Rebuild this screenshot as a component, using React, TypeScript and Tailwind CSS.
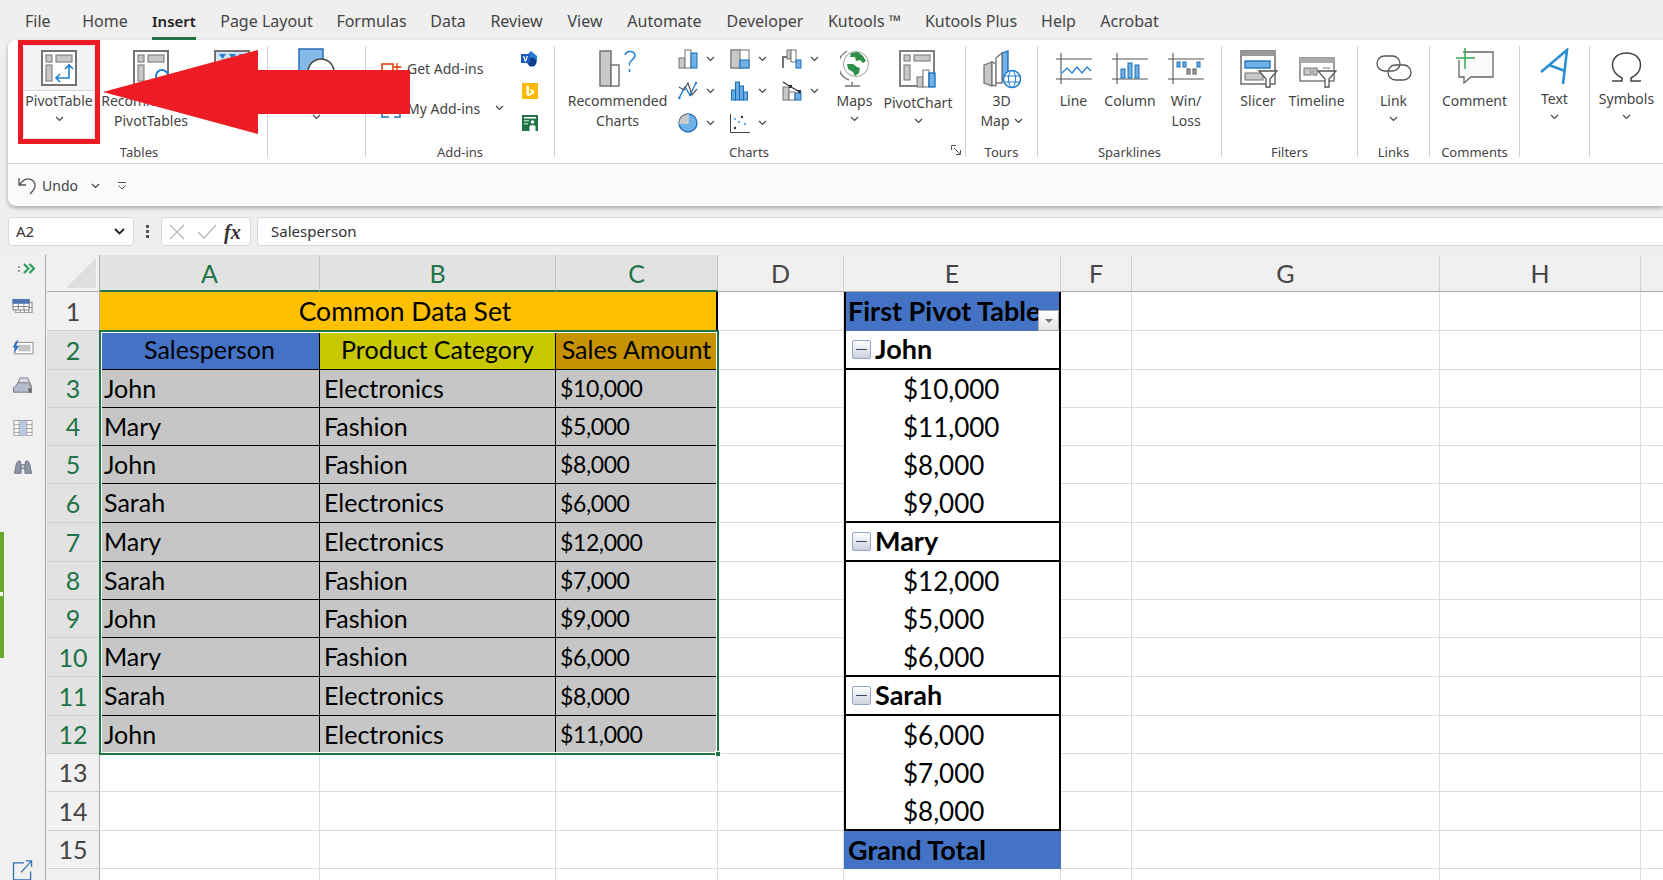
import React from 'react';

const G = '#737373';
const L = '#c8c8c8';
const B = '#1f7fd0';
const LB = '#6fb1e8';

const Chevron = ({ className = '' }: { className?: string }) => (
  <svg width="9" height="6" viewBox="0 0 9 6" className={className} fill="none" stroke="#444" strokeWidth="1.2">
    <path d="M1 1l3.5 3.5L8 1" />
  </svg>
);

const PivotFrame = () => (
  <>
    <rect x="1" y="1" width="34" height="34" fill="#fff" stroke={G} strokeWidth="2" />
    <rect x="5" y="5" width="6" height="7" fill={L} stroke={G} />
    <rect x="15" y="5" width="16" height="7" fill={L} stroke={G} />
    <rect x="5" y="15" width="6" height="16" fill={L} stroke={G} />
  </>
);

const PivotTableIcon = () => (
  <svg width="36" height="36" viewBox="0 0 36 36" fill="none">
    <PivotFrame />
    <path d="M29 17v12H17M25 20l4-4 4 4M20 25l-4 4 4 4" stroke={B} strokeWidth="1.6" transform="translate(-1 -1)" />
  </svg>
);

const RecPivotIcon = () => (
  <svg width="36" height="36" viewBox="0 0 36 36" fill="none">
    <PivotFrame />
    <circle cx="29" cy="26" r="6" fill="#fff" stroke={B} strokeWidth="2" />
  </svg>
);

const TableIcon = () => (
  <svg width="36" height="36" viewBox="0 0 36 36" fill="none">
    <rect x="1" y="1" width="34" height="34" fill="#fff" stroke={G} strokeWidth="2" />
    <rect x="2" y="2" width="32" height="8" fill="#cfe3f5" />
    <path d="M5 4h7l-3.5 5zM15 4h7l-3.5 5zM25 4h7l-3.5 5z" fill={B} />
  </svg>
);

const ShapesIcon = () => (
  <svg width="37" height="40" viewBox="0 0 37 40" fill="none">
    <rect x="1" y="1" width="24" height="28" fill="#85bbea" stroke="#2a6fb5" strokeWidth="1.5" />
    <circle cx="23" cy="24" r="13" fill="#fff" stroke="#444" strokeWidth="1.5" />
  </svg>
);

const GetAddInIcon = () => (
  <svg width="21" height="13" viewBox="0 0 21 13" fill="none" className="mt-[3px]">
    <rect x="1" y="1" width="11" height="11" stroke="#d83b01" strokeWidth="1.5" />
    <path d="M16 0v8M12.500 4h8" stroke="#d83b01" strokeWidth="1.3" />
  </svg>
);

const MyAddInIcon = () => (
  <svg width="20" height="18" viewBox="0 0 20 18" fill="none" className="mt-[3px]">
    <path d="M1 9v7h7M13 16h6V9" stroke="#2b6fc4" strokeWidth="1.6" />
    <rect x="5" y="2" width="9" height="9" fill="#fff" stroke="#2b6fc4" strokeWidth="1.4" />
  </svg>
);

const VisioIcon = () => (
  <svg width="18" height="16" viewBox="0 0 18 16">
    <path d="M10 0l6 5v5l-6 6-4-4V4z" fill="#2b7cd3" />
    <circle cx="11" cy="11" r="4.500" fill="#103f91" />
    <rect x="0" y="3" width="9" height="9" fill="#185abd" />
    <path d="M2 5h1.300l1.200 4 1.200-4H7L5.200 10.500H3.800z" fill="#fff" />
  </svg>
);

const BingIcon = () => (
  <svg width="16" height="16" viewBox="0 0 16 16">
    <rect width="16" height="16" fill="#ffb900" />
    <path d="M4.500 2.500l2.500.8v7.500l3.200-1.700-1.500-.8-.9-2.300 4.200 1.500v2.400L7 13.200l-2.500-1.400z" fill="#fff" />
  </svg>
);

const PeopleIcon = () => (
  <svg width="16" height="16" viewBox="0 0 16 16">
    <rect width="16" height="16" fill="#217346" />
    <rect x="2" y="2" width="12" height="1.500" fill="#fff" />
    <rect x="2" y="5" width="5" height="1.500" fill="#9fd5b7" />
    <rect x="2" y="8" width="4" height="1.500" fill="#9fd5b7" />
    <circle cx="10.500" cy="7" r="1.800" fill="#fff" />
    <path d="M7.500 16v-4q0-2 3-2t3 2v4z" fill="#fff" />
  </svg>
);

const RecChartsIcon = () => (
  <svg width="38" height="37" viewBox="0 0 38 37" fill="none">
    <rect x="1" y="1" width="11" height="35" fill={L} stroke={G} strokeWidth="1.5" />
    <rect x="12" y="15" width="8" height="21" fill="#fff" stroke={G} strokeWidth="1.5" />
    <path d="M26 5q1-3.500 5-3.500t5 3.500q0 3-3 5t-2.500 5.500M30.500 19v3" stroke={B} strokeWidth="1.500" />
  </svg>
);

const ColumnChartIcon = () => (
  <svg width="20" height="20" viewBox="0 0 20 20" fill="none">
    <rect x="1" y="9" width="6" height="10" fill={L} stroke={G} />
    <rect x="7" y="1" width="6" height="18" fill="#fff" stroke={G} />
    <rect x="13" y="4" width="6" height="15" fill={LB} stroke="#1a6cb5" />
  </svg>
);

const TreeIcon = () => (
  <svg width="20" height="20" viewBox="0 0 20 20" fill="none">
    <rect x="1" y="1" width="18" height="18" fill="#fff" stroke={G} />
    <rect x="1" y="1" width="9" height="18" fill={L} stroke={G} />
    <rect x="10" y="11" width="9" height="8" fill={LB} stroke="#1a6cb5" />
  </svg>
);

const WaterfallIcon = () => (
  <svg width="20" height="20" viewBox="0 0 20 20" fill="none">
    <path d="M1 19V8h4" stroke={G} strokeWidth="2" />
    <rect x="5" y="1" width="4" height="9" fill={L} stroke={G} />
    <rect x="9" y="1" width="5" height="12" fill="#fff" stroke={G} />
    <rect x="14" y="11" width="5" height="8" fill={LB} stroke="#1a6cb5" />
  </svg>
);

const LineChartIcon = () => (
  <svg width="20" height="20" viewBox="0 0 20 20" fill="none">
    <path d="M1 17L7 6l5 8 6-12" stroke={B} strokeWidth="1.400" />
    <path d="M1 6l5 3 4-7 4 12 5-6" stroke="#555" strokeWidth="1.200" />
    <circle cx="1.500" cy="17" r="1.200" fill={B} />
    <circle cx="12" cy="14" r="1.200" fill={B} />
    <circle cx="18" cy="2" r="1.200" fill={B} />
  </svg>
);

const HistogramIcon = () => (
  <svg width="20" height="20" viewBox="0 0 20 20" fill="#69ace3" stroke="#1a6cb5">
    <rect x="1.500" y="9" width="4" height="10" />
    <rect x="5.500" y="1" width="4" height="18" />
    <rect x="9.500" y="5" width="4" height="14" />
    <rect x="13.500" y="11" width="4" height="8" />
  </svg>
);

const ComboIcon = () => (
  <svg width="20" height="20" viewBox="0 0 20 20" fill="none">
    <rect x="1" y="6" width="6" height="13" fill={L} stroke={G} />
    <rect x="7" y="11" width="6" height="8" fill="#fff" stroke={G} />
    <rect x="13" y="12" width="6" height="7" fill={LB} stroke="#1a6cb5" />
    <path d="M1 1l8 5 9 5" stroke="#333" strokeWidth="1.300" />
    <rect x="7" y="4" width="3" height="3" fill="#333" />
    <rect x="16" y="9" width="3" height="3" fill="#333" />
  </svg>
);

const PieIcon = () => (
  <svg width="20" height="20" viewBox="0 0 20 20" fill="none">
    <circle cx="10" cy="10" r="9" fill={LB} stroke="#1a6cb5" strokeWidth="1.300" />
    <path d="M10 10V1a9 9 0 0 0-9 9z" fill={L} stroke={G} />
    <path d="M10 1v9H1" stroke="#fff" />
  </svg>
);

const ScatterIcon = () => (
  <svg width="20" height="20" viewBox="0 0 20 20" fill="none">
    <path d="M.500 1v18.500H20" stroke="#444" />
    <circle cx="5" cy="15" r="1.200" fill="#333" />
    <circle cx="12" cy="4" r="1.200" fill="#333" />
    <circle cx="9" cy="9" r="1.200" fill={LB} />
    <circle cx="15" cy="11" r="1.200" fill={LB} />
    <circle cx="5" cy="6" r="1.200" fill={LB} />
  </svg>
);

const GlobeIcon = () => (
  <svg width="30" height="38" viewBox="0 0 30 38" fill="none">
    <path d="M7 2a16 16 0 0 0 2 29" stroke={G} strokeWidth="1.400" />
    <circle cx="16" cy="15" r="12.500" fill="#fff" stroke="#9a9a9a" />
    <path d="M11 4l7-1 5 4 3 5-3 2-3-3-4 1-1-4-5 0zM7 15l6 0 4 3 3 1-1 5-4 3-2-4-5-3z" fill="#2d8f47" />
    <path d="M12 33v3M5 37h15" stroke={G} strokeWidth="1.400" />
  </svg>
);

const PivotChartIcon = () => (
  <svg width="38" height="39" viewBox="0 0 38 39" fill="none">
    <rect x="1" y="1" width="34" height="35" fill="#fff" stroke={G} strokeWidth="1.800" />
    <rect x="5" y="5" width="6" height="6" fill={L} stroke={G} />
    <rect x="15" y="5" width="16" height="6" fill={L} stroke={G} />
    <rect x="5" y="15" width="6" height="15" fill={L} stroke={G} />
    <rect x="18" y="27" width="6" height="10" fill={L} stroke={G} />
    <rect x="24" y="20" width="6" height="17" fill="#fff" stroke={G} />
    <rect x="30" y="23" width="6" height="14" fill={LB} stroke="#1a6cb5" strokeWidth="1.300" />
  </svg>
);

const Map3dIcon = () => (
  <svg width="38" height="39" viewBox="0 0 38 39" fill="none">
    <path d="M1 15l8-3v24l-8-3z" fill={L} stroke={G} strokeWidth="1.300" />
    <path d="M9 12l4 2v22l-4-1z" fill="#fff" stroke={G} strokeWidth="1.300" />
    <path d="M19 3l6-2 v20l-6 10z" fill={LB} stroke="#1a6cb5" strokeWidth="1.300" />
    <path d="M13 8l6-5v30h-6z" fill="#fff" stroke={G} strokeWidth="1.300" />
    <circle cx="29" cy="29" r="8.500" fill="#fff" stroke={B} strokeWidth="1.500" />
    <ellipse cx="29" cy="29" rx="3.500" ry="8.500" stroke={B} />
    <path d="M21 26h16M21 32h16" stroke={B} />
  </svg>
);

const SparkFrame = ({ children }: { children?: React.ReactNode }) => (
  <svg width="36" height="31" viewBox="0 0 36 31" fill="none">
    <path d="M0 6h36M0 26h36M5 0v31" stroke="#555" strokeWidth="1.100" />
    {children}
  </svg>
);

const SlicerIcon = () => (
  <svg width="38" height="38" viewBox="0 0 38 38" fill="none">
    <rect x="1" y="1" width="34" height="33" fill="#fff" stroke={G} strokeWidth="1.600" />
    <rect x="1" y="1" width="34" height="5" fill="#999" />
    <rect x="5" y="11" width="25" height="7" fill={LB} stroke="#1a6cb5" strokeWidth="1.300" />
    <rect x="5" y="23" width="18" height="7" fill={L} stroke={G} />
    <path d="M19 21h18l-7 8v8h-4v-8z" fill="#fff" stroke="#555" strokeWidth="1.300" />
  </svg>
);

const TimelineIcon = () => (
  <svg width="38" height="31" viewBox="0 0 38 31" fill="none">
    <rect x="1" y="1" width="34" height="23" fill="#fff" stroke={G} strokeWidth="1.400" />
    <rect x="1" y="1" width="34" height="5" fill="#aaa" />
    <rect x="5" y="11" width="7" height="7" fill={L} stroke={G} />
    <rect x="14" y="11" width="4" height="7" fill={L} stroke={G} />
    <path d="M24 11h7" stroke={G} />
    <path d="M19 14h18l-7 8v8h-4v-8z" fill="#fff" stroke="#555" strokeWidth="1.300" />
  </svg>
);

const LinkIcon = () => (
  <svg width="36" height="26" viewBox="0 0 36 26" fill="none" stroke="#555" strokeWidth="1.300">
    <rect x="1" y="1" width="23" height="15" rx="7.500" />
    <rect x="12" y="10" width="23" height="15" rx="7.500" />
  </svg>
);

const CommentIcon = () => (
  <svg width="38" height="36" viewBox="0 0 38 36" fill="none">
    <path d="M7 4h30v25H15l-7 6v-6H3V12" fill="#fafafa" stroke="#666" strokeWidth="1.300" />
    <path d="M9 0v21M0 10h19" stroke="#34a853" strokeWidth="1.500" />
  </svg>
);

const TextAIcon = () => (
  <svg width="30" height="36" viewBox="0 0 30 36" fill="none" stroke="#2b8fd6" strokeWidth="2.600">
    <path d="M1 24L27 2 23 36M9 17l16 6" />
  </svg>
);

const OmegaIcon = () => (
  <svg width="31" height="30" viewBox="0 0 31 30" fill="none" stroke="#444" strokeWidth="1.500">
    <path d="M1 29h10v-3C5 23 1.500 18 1.500 13 1.500 6 7 1 15.500 1S29.500 6 29.500 13c0 5-3.500 10-9.500 13v3h10" />
  </svg>
);

const LauncherIcon = () => (
  <svg width="10" height="10" viewBox="0 0 10 10" fill="none" stroke="#555">
    <path d="M.500 5V.500H5M3 3l6 6M9.500 5v4.500H5" />
  </svg>
);

interface BtnProps {
  className: string;
  icon: React.ReactNode;
  lines?: string[];
  chevron?: boolean;
  iconClass?: string;
}

// one big ribbon button: icon, one or two lines of label, optional chevron
const RibbonBtn = ({ className, icon, lines = [], chevron, iconClass = 'h-[46px] pt-[5px]' }: BtnProps) => (
  <div className={`flex flex-col items-center shrink-0 ${className}`}>
    <div className={`flex justify-center ${iconClass}`}>{icon}</div>
    {lines.map(l => (
      <div key={l} className="h-[20px] leading-[20px] whitespace-nowrap">{l}</div>
    ))}
    {chevron && <div className="h-[15px] flex items-center"><Chevron /></div>}
  </div>
);

const Sep = () => <div className="w-px h-[111px] mt-px bg-[#d2d2d2] shrink-0" />;

const Group = ({ className, label, labelClass = '', children }: { className: string; label?: string; labelClass?: string; children: React.ReactNode }) => (
  <div className={`flex flex-col shrink-0 h-[118px] ${className}`}>
    <div className="flex flex-1">{children}</div>
    {label && <div className={`h-[20px] text-center text-[13px] leading-[20px] text-[#444] mb-px ${labelClass}`}>{label}</div>}
  </div>
);

const SmallChart = ({ icon }: { icon: React.ReactNode }) => (
  <div className="flex items-center h-[20px] w-[52px]">
    {icon}
    <Chevron className="ml-[8px]" />
  </div>
);

const tabs = [
  { t: 'Home', c: 'w-[46px]' },
  { t: 'Insert', c: 'w-[44px] font-semibold text-[15px] text-[#222]' },
  { t: 'Page Layout', c: 'w-[93px]' },
  { t: 'Formulas', c: 'w-[69px]' },
  { t: 'Data', c: 'w-[36px]' },
  { t: 'Review', c: 'w-[53px]' },
  { t: 'View', c: 'w-[36px]' },
  { t: 'Automate', c: 'w-[75px]' },
  { t: 'Developer', c: 'w-[78px]' },
  { t: 'Kutools ™', c: 'w-[73px]' },
  { t: 'Kutools Plus', c: 'w-[92px]' },
  { t: 'Help', c: 'w-[35px]' },
  { t: 'Acrobat', c: 'w-[59px]' },
];

const Ribbon = () => (
  <div className="ml-[8px] h-[166px] rounded-l-[8px] bg-[#fafafa] shadow-[0_2px_4px_rgba(0,0,0,0.3)] overflow-hidden">
    <div className="h-[124px] bg-white border-b border-[#d4d4d4] pt-[5px] flex text-[14px] text-[#444]">
      <Group className="w-[259px]" label="Tables" labelClass="pl-[3px]">
        <RibbonBtn
          className="w-[72px] ml-[15px] h-[94px] rounded-[3px] border border-[#e2e2e2]"
          iconClass="h-[45px] pt-[4px] w-full bg-[#f4f4f4] border-b border-[#d6d6d6]"
          icon={<PivotTableIcon />}
          lines={['PivotTable']}
          chevron
        />
        <RibbonBtn className="w-[100px] ml-[6px]" icon={<RecPivotIcon />} lines={['Recommended', 'PivotTables']} />
        <RibbonBtn className="w-[61px]" icon={<TableIcon />} />
      </Group>
      <Sep />
      <Group className="w-[97px]">
        <div className="flex flex-col items-center w-full pt-[3px]">
          <div className="h-[65px]"><ShapesIcon /></div>
          <Chevron className="mt-[1px]" />
        </div>
      </Group>
      <Sep />
      <Group className="w-[188px]" label="Add-ins">
        <div className="w-[156px] pl-[15px] pt-[13px]">
          <div className="flex items-center h-[20px]">
            <GetAddInIcon />
            <span className="ml-[5px]">Get Add-ins</span>
          </div>
          <div className="flex items-center h-[20px] mt-[20px]">
            <MyAddInIcon />
            <span className="ml-[6px]">My Add-ins</span>
            <Chevron className="ml-[15px]" />
          </div>
        </div>
        <div className="flex flex-col items-center gap-[16px] pt-[6px] w-[16px]">
          <VisioIcon />
          <BingIcon />
          <PeopleIcon />
        </div>
      </Group>
      <Sep />
      <div className="w-[410px] shrink-0 flex flex-col h-[118px]">
        <div className="flex flex-1">
          <RibbonBtn className="w-[101px] ml-[12px]" icon={<RecChartsIcon />} lines={['Recommended', 'Charts']} />
          <div className="grid grid-cols-[52px_52px_52px] auto-rows-[20px] gap-y-[12px] ml-[10px] pt-[4px] h-[90px]">
            <SmallChart icon={<ColumnChartIcon />} />
            <SmallChart icon={<TreeIcon />} />
            <SmallChart icon={<WaterfallIcon />} />
            <SmallChart icon={<LineChartIcon />} />
            <SmallChart icon={<HistogramIcon />} />
            <SmallChart icon={<ComboIcon />} />
            <SmallChart icon={<PieIcon />} />
            <SmallChart icon={<ScatterIcon />} />
          </div>
          <RibbonBtn className="w-[57px] -ml-[8px]" iconClass="h-[46px] pt-[4px]" icon={<GlobeIcon />} lines={['Maps']} chevron />
          <RibbonBtn className="w-[70px]" iconClass="h-[48px] pt-[5px]" icon={<PivotChartIcon />} lines={['PivotChart']} chevron />
        </div>
        <div className="flex h-[20px] mb-px">
          <div className="w-[388px] text-center text-[13px] leading-[20px]">Charts</div>
          <div className="pl-[8px] pt-[3px]"><LauncherIcon /></div>
        </div>
      </div>
      <Sep />
      <Group className="w-[71px]" label="Tours">
        <div className="w-full flex flex-col items-center">
          <div className="h-[46px] pt-[5px]"><Map3dIcon /></div>
          <div className="h-[20px] leading-[20px]">3D</div>
          <div className="h-[20px] leading-[20px] flex items-center">Map<Chevron className="ml-[4px]" /></div>
        </div>
      </Group>
      <Sep />
      <Group className="w-[183px]" label="Sparklines">
        <RibbonBtn
          className="w-[57px] ml-[7px]"
          iconClass="h-[46px] pt-[8px]"
          lines={['Line']}
          icon={<SparkFrame><path d="M6 20l5-5 5 5 5-6 5 6 5-6 4 4" stroke={B} strokeWidth="1.200" /></SparkFrame>}
        />
        <RibbonBtn
          className="w-[56px]"
          iconClass="h-[46px] pt-[8px]"
          lines={['Column']}
          icon={<SparkFrame><g fill={LB} stroke="#1a6cb5"><rect x="9" y="16" width="4" height="9" /><rect x="16" y="10" width="4" height="15" /><rect x="23" y="12" width="4" height="13" /></g></SparkFrame>}
        />
        <RibbonBtn
          className="w-[56px]"
          iconClass="h-[46px] pt-[8px]"
          lines={['Win/', 'Loss']}
          icon={<SparkFrame><g fill={LB} stroke="#1a6cb5"><rect x="9" y="9" width="3" height="5" /><rect x="15" y="9" width="3" height="5" /><rect x="29" y="9" width="3" height="5" /></g><g fill="#aaa" stroke="#555"><rect x="19" y="16" width="3" height="5" /><rect x="25" y="16" width="3" height="5" /></g></SparkFrame>}
        />
      </Group>
      <Sep />
      <Group className="w-[135px]" label="Filters">
        <RibbonBtn className="w-[60px] ml-[6px]" iconClass="h-[46px] pt-[5px] pl-[2px]" icon={<SlicerIcon />} lines={['Slicer']} />
        <RibbonBtn className="w-[57px]" iconClass="h-[46px] pt-[12px] pl-[2px]" icon={<TimelineIcon />} lines={['Timeline']} />
      </Group>
      <Sep />
      <Group className="w-[71px]" label="Links">
        <RibbonBtn className="w-full" iconClass="h-[46px] pt-[10px]" icon={<LinkIcon />} lines={['Link']} chevron />
      </Group>
      <Sep />
      <Group className="w-[89px]" label="Comments">
        <RibbonBtn className="w-full" iconClass="h-[46px] pt-[3px]" icon={<CommentIcon />} lines={['Comment']} />
      </Group>
      <Sep />
      <Group className="w-[69px]">
        <RibbonBtn className="w-full -mt-px" iconClass="h-[45px] pt-[4px]" icon={<TextAIcon />} lines={['Text']} chevron />
      </Group>
      <Sep />
      <Group className="w-[73px]">
        <RibbonBtn className="w-full -mt-px" iconClass="h-[45px] pt-[8px]" icon={<OmegaIcon />} lines={['Symbols']} chevron />
      </Group>
    </div>
    <div className="h-[42px] flex items-center pl-[10px] pt-px text-[#444] text-[14px]">
      <svg width="19" height="20" viewBox="0 0 19 20" fill="none" stroke="#555" strokeWidth="1.300">
        <path d="M1 2v7h7M1 9l4-4a7 7 0 0 1 12 5q0 3-5 8" />
      </svg>
      <span className="ml-[5px]">Undo</span>
      <Chevron className="ml-[13px]" />
      <svg width="10" height="8" viewBox="0 0 10 8" fill="none" stroke="#555" className="ml-[17px]">
        <path d="M1 .500h8M1.500 3.500L5 7l3.500-3.500" />
      </svg>
    </div>
  </div>
);

const FormulaBar = () => (
  <div className="mt-[11px] h-[29px] flex items-stretch text-[15px] text-[#333]">
    <div className="ml-[8px] w-[126px] rounded-[4px] bg-white border border-[#d8d8d8] flex items-center justify-between pl-[7px] pr-[8px]">
      <span>A2</span>
      <svg width="11" height="7" viewBox="0 0 11 7" fill="none" stroke="#222" strokeWidth="1.800"><path d="M1 1l4.500 4.500L10 1" /></svg>
    </div>
    <div className="w-[27px] flex flex-col items-center justify-center gap-[2px]">
      <div className="w-[3px] h-[3px] bg-[#555]" />
      <div className="w-[3px] h-[3px] bg-[#555]" />
      <div className="w-[3px] h-[3px] bg-[#555]" />
    </div>
    <div className="w-[90px] rounded-[4px] bg-white border border-[#d8d8d8] flex items-center pl-[7px]">
      <svg width="16" height="16" viewBox="0 0 16 16" fill="none" stroke="#b5b5b5" strokeWidth="1.300"><path d="M1 1l14 14M15 1L1 15" /></svg>
      <svg width="20" height="15" viewBox="0 0 20 15" fill="none" stroke="#b5b5b5" strokeWidth="1.300" className="ml-[12px]"><path d="M1 8l6 6L19 1" /></svg>
      <span className="ml-[7px] font-['Liberation_Serif',serif] italic font-bold text-[20px] leading-none text-[#333]">fx</span>
    </div>
    <div className="ml-[6px] flex-1 rounded-l-[4px] bg-white border border-r-0 border-[#d8d8d8] flex items-center pl-[13px]">Salesperson</div>
  </div>
);

const SideIcons = () => (
  <div className="relative w-[46px] shrink-0 h-[626px] bg-[#f0f0f0] border-r border-[#a8a8a8] flex flex-col items-center overflow-hidden">
    <div className="absolute left-0 top-[277px] w-[4px] h-[126px] bg-[#69a82f]">
      <div className="w-[3px] h-[4px] mt-[60px] bg-white" />
    </div>
    <div className="mt-[8px] ml-[8px] flex items-center gap-[3px]">
      <div className="flex flex-col gap-[2px]">
        <div className="w-[2px] h-[2px] bg-[#999]" />
        <div className="w-[2px] h-[2px] bg-[#999]" />
      </div>
      <svg width="12" height="11" viewBox="0 0 12 11" fill="none" stroke="#2f9e5f" strokeWidth="2.200"><path d="M1 1l4.500 4.500L1 10M6.500 1L11 5.500 6.500 10" /></svg>
    </div>
    <svg width="21" height="15" viewBox="0 0 21 15" className="mt-[25px]" fill="#fff" stroke="#7b7b7b">
      <rect x="3.500" y="3.500" width="17" height="11" />
      <path d="M8 5v9M12.500 5v9M17 5v9M4 9h16" />
      <rect x=".5" y=".5" width="17" height="11" />
      <path d="M.5 8h17M6 5v6M12 5v6" />
      <rect x=".5" y=".5" width="17" height="4" fill="#4e77b0" stroke="#4e77b0" />
    </svg>
    <svg width="22" height="16" viewBox="0 0 22 16" className="mt-[27px]">
      <rect x="2.500" y="2.500" width="19" height="12" fill="#fff" stroke="#8a8a8a" />
      <rect x="6" y="5" width="13" height="7" fill="#c4c4c4" />
      <path d="M5 0L0 8h3l-2 7 6-9H4l2-6z" fill="#2b6fc4" />
    </svg>
    <svg width="21" height="18" viewBox="0 0 21 18" className="mt-[22px]" fill="#b4bbcc" stroke="#7b7b7b">
      <path d="M4 10l4-9h8l4 9z" fill="#d8dce6" />
      <path d="M2 11l4-5h11l3 5v5H1v-5z" />
      <rect x="17" y="12" width="3" height="4" fill="#666" />
    </svg>
    <svg width="20" height="17" viewBox="0 0 20 17" className="mt-[25px]" fill="#fff" stroke="#9a9a9a">
      <rect x=".5" y=".5" width="19" height="16" />
      <path d="M.5 5h19M.5 9h19M.5 13h19M6 .5v16M14 .5v16" />
      <rect x="7" y="1" width="6" height="15" fill="#b7c8e2" stroke="none" />
    </svg>
    <svg width="20" height="15" viewBox="0 0 20 15" className="mt-[24px]" fill="#8f97a6" stroke="#6f7684">
      <path d="M1 14l2-10 2-3h2l1 4v9zM19 14l-2-10-2-3h-2l-1 4v9z" />
      <rect x="8" y="5" width="4" height="4" fill="#c7ccd6" />
    </svg>
    <svg width="22" height="22" viewBox="0 0 22 22" className="mt-[386px]" fill="none" stroke="#2b6fb5" strokeWidth="1.300">
      <path d="M12 3H1v18h18V12" />
      <path d="M9 13l11-12M14 1h6v6" />
    </svg>
  </div>
);

const table: [string, string, string][] = [
  ['John', 'Electronics', '$10,000'],
  ['Mary', 'Fashion', '$5,000'],
  ['John', 'Fashion', '$8,000'],
  ['Sarah', 'Electronics', '$6,000'],
  ['Mary', 'Electronics', '$12,000'],
  ['Sarah', 'Fashion', '$7,000'],
  ['John', 'Fashion', '$9,000'],
  ['Mary', 'Fashion', '$6,000'],
  ['Sarah', 'Electronics', '$8,000'],
  ['John', 'Electronics', '$11,000'],
];

// column E, rows 3 to 14
const pivot: { text: string; head?: boolean; end?: boolean }[] = [
  { text: '$10,000' },
  { text: '$11,000' },
  { text: '$8,000' },
  { text: '$9,000', end: true },
  { text: 'Mary', head: true, end: true },
  { text: '$12,000' },
  { text: '$5,000' },
  { text: '$6,000', end: true },
  { text: 'Sarah', head: true, end: true },
  { text: '$6,000' },
  { text: '$7,000' },
  { text: '$8,000', end: true },
];

const MinusBox = () => (
  <div className="w-[19px] h-[19px] shrink-0 rounded-[2px] border border-[#93a5c9] bg-gradient-to-b from-white to-[#cdd1dc] flex items-center justify-center">
    <div className="w-[11px] h-px bg-[#3c4a66]" />
  </div>
);

const gridLine = 'border-r border-b border-[#dcdcdc]';
const dataCell = 'bg-[#c6c6c6] border-r border-b border-black pl-[4px] flex items-center overflow-hidden whitespace-nowrap';
const headCell = 'border-r border-b border-black flex items-center justify-center overflow-hidden whitespace-nowrap';

const Blanks = ({ cols }: { cols: string[] }) => (
  <>
    {cols.map(c => <div key={c} className={gridLine} />)}
  </>
);

const RowHead = ({ n }: { n: number }) => {
  const sel = n >= 2 && n <= 12;
  return (
    <div className={`flex items-center justify-center pt-px border-b border-[#d0d0d0] border-r text-[25px] ${sel ? 'bg-[#e2e2e2] text-[#217346] border-r-[#217346]' : 'bg-[#f1f1f1] text-[#444] border-r-[#aaaaaa]'}`}>
      {n}
    </div>
  );
};

const Sheet = () => (
  <div className="relative flex-1 h-[626px] overflow-hidden bg-white grid grid-cols-[53px_220px_236px_162px_126px_217px_71px_308px_201px_23px] grid-rows-[37px_39px_39px_38px_38px_38px_39px_39px_38px_38px_39px_39px_38px_38px_39px_38px_12px] font-['Lato',sans-serif] text-[25px] text-black">
    {/* header row */}
    <div className="bg-[#f1f1f1] border-r border-b border-[#aaaaaa] flex items-end justify-end p-[3px]">
      <svg width="30" height="30" viewBox="0 0 30 30"><path d="M30 0v30H0z" fill="#dfdfdf" /></svg>
    </div>
    {['A', 'B', 'C'].map(c => (
      <div key={c} className="bg-[#e2e2e2] border-r border-[#c4c4c4] border-b-2 border-b-[#217346] flex items-center justify-center pt-[2px] text-[#217346] text-[25px]">{c}</div>
    ))}
    {['D', 'E', 'F', 'G', 'H', 'I'].map(c => (
      <div key={c} className="bg-[#f0f0f0] border-r border-[#d4d4d4] border-b border-b-[#aaaaaa] flex items-center justify-center pt-[2px] text-[#444] text-[25px]">{c === 'I' ? '' : c}</div>
    ))}

    {/* row 1 */}
    <RowHead n={1} />
    <div className="col-span-3 bg-[#ffc000] border-r-2 border-black flex items-center justify-center pr-[6px] text-[26.5px]">Common Data Set</div>
    <Blanks cols={['d']} />
    <div className="relative bg-[#4472c4] border-x-2 border-black font-bold text-[27px] flex items-center pl-[2px] overflow-hidden whitespace-nowrap">
      First Pivot Table
      <div className="absolute right-0 bottom-0 w-[21px] h-[21px] bg-gradient-to-b from-white to-[#e4e4e4] border border-[#aaaaaa] flex items-center justify-center">
        <div className="w-0 h-0 border-x-[4px] border-x-transparent border-t-[4px] border-t-[#777]" />
      </div>
    </div>
    <Blanks cols={['f', 'g', 'h', 'i']} />

    {/* row 2 */}
    <RowHead n={2} />
    <div className={`${headCell} bg-[#4472c4]`}>Salesperson</div>
    <div className={`${headCell} bg-[#c8c800]`}>Product Category</div>
    <div className={`${headCell} bg-[#c69200]`}>Sales Amount</div>
    <Blanks cols={['d']} />
    <div className="border-x-2 border-b-2 border-black flex items-center pl-[6px] gap-[4px] font-bold text-[27px] bg-white">
      <MinusBox />
      John
    </div>
    <Blanks cols={['f', 'g', 'h', 'i']} />

    {/* rows 3-12, rows 13-14 have no table part */}
    {pivot.map((p, i) => {
      const rec = table[i];
      return (
        <React.Fragment key={i}>
          <RowHead n={i + 3} />
          {rec ? (
            <>
              <div className={dataCell}>{rec[0]}</div>
              <div className={dataCell}>{rec[1]}</div>
              <div className={`${dataCell} text-[23px] tracking-[-0.4px]`}>{rec[2]}</div>
            </>
          ) : (
            <Blanks cols={['a', 'b', 'c']} />
          )}
          <Blanks cols={['d']} />
          <div className={`border-x-2 border-black flex items-center bg-white ${p.end ? 'border-b-2' : ''} ${p.head ? 'pl-[6px] gap-[4px] font-bold text-[27px]' : 'pl-[57px] pt-px text-[26px]'}`}>
            {p.head && <MinusBox />}
            {p.text}
          </div>
          <Blanks cols={['f', 'g', 'h', 'i']} />
        </React.Fragment>
      );
    })}

    {/* row 15 */}
    <RowHead n={15} />
    <Blanks cols={['a', 'b', 'c', 'd']} />
    <div className="bg-[#4472c4] font-bold text-[27px] flex items-center pl-[4px]">Grand Total</div>
    <Blanks cols={['f', 'g', 'h', 'i']} />

    {/* row 16 is cut by the window */}
    <div className="bg-[#f1f1f1] border-r border-[#aaaaaa]" />
    <Blanks cols={['a', 'b', 'c', 'd', 'e', 'f', 'g', 'h', 'i']} />

    {/* selection A2:C12 */}
    <div className="absolute col-start-2 col-end-5 row-start-3 row-end-14 -inset-px border-2 border-[#217346] shadow-[inset_0_0_0_1px_#ffffff] pointer-events-none">
      <div className="absolute -right-[4px] -bottom-[4px] w-[6px] h-[6px] bg-[#217346] border border-white" />
    </div>
  </div>
);

export default function App() {
  return (
    <div className="relative w-[1663px] h-[880px] overflow-hidden bg-[#efefef] font-['Noto_Sans',sans-serif]">
      <div className="h-[40px] flex pl-[25px] text-[16px] text-[#444]">
        <div className="w-[24px] mr-[33px] h-[40px] leading-[43px] whitespace-nowrap">File</div>
        <div className="flex gap-[24px]">
          {tabs.map(tab => (
            <div key={tab.t} className={`relative h-[40px] leading-[43px] flex justify-center whitespace-nowrap ${tab.c}`}>
              {tab.t}
              {tab.t === 'Insert' && <div className="absolute left-0 right-0 bottom-0 h-[3px] bg-[#217346]" />}
            </div>
          ))}
        </div>
      </div>
      <Ribbon />
      <FormulaBar />
      <div className="mt-[9px] flex">
        <div className="flex w-[47px] shrink-0"><SideIcons /></div>
        <Sheet />
      </div>
      {/* annotations drawn over the screenshot */}
      <div className="absolute left-[18px] top-[40px] w-[82px] h-[104px] border-[5px] border-[#ed1c24]" />
      <svg width="307" height="84" viewBox="0 0 307 84" className="absolute left-[103px] top-[50px]">
        <path d="M0 42L155 0v20h152v44H155v20z" fill="#ed1c24" />
      </svg>
    </div>
  );
}
